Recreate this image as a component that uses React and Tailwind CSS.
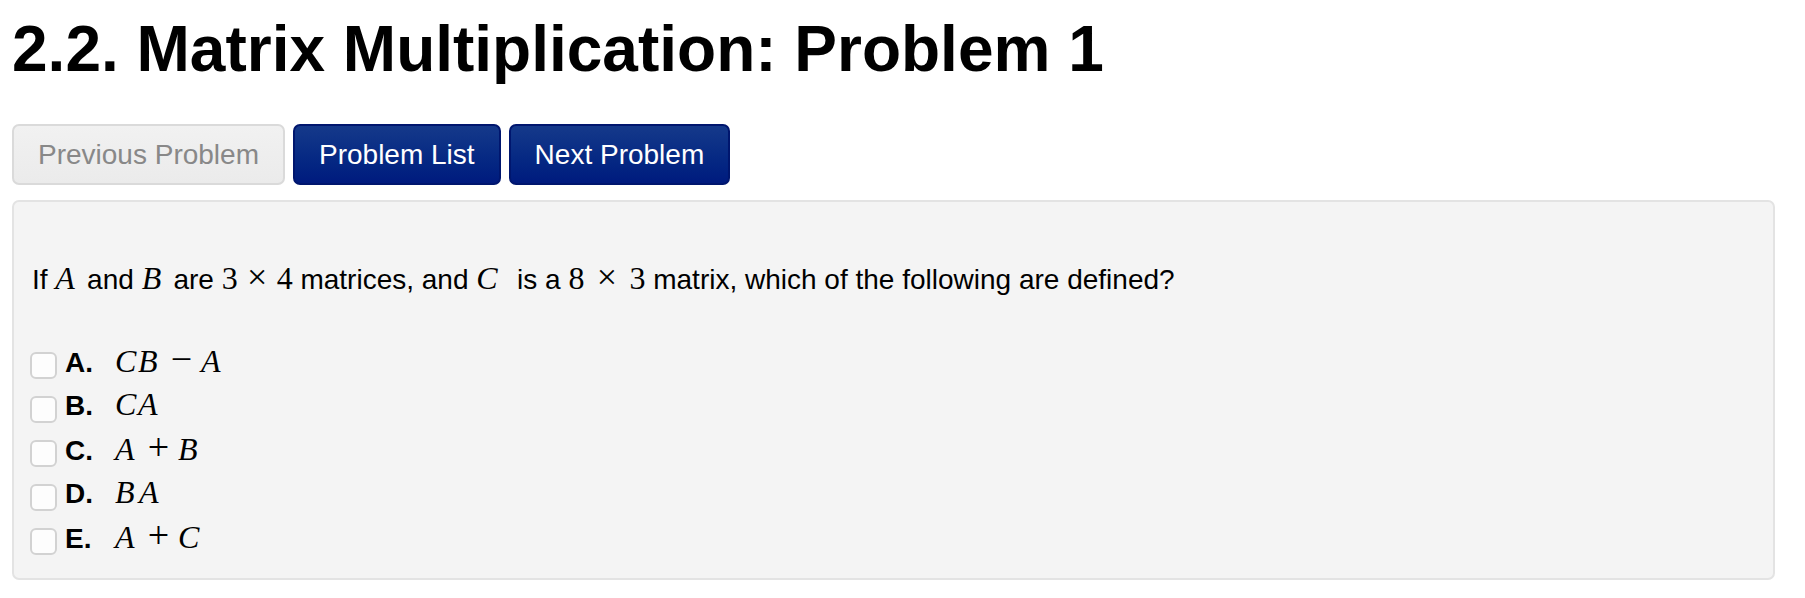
const options = [
  { label: "A", expr: ["C", "B", "−", "A"] },
  { label: "B", expr: ["C", "A"] },
  { label: "C", expr: ["A", "+", "B"] },
  { label: "D", expr: ["B", "A"] },
  { label: "E", expr: ["A", "+", "C"] },
];

// advance widths close to the TeX fonts at 32px
const varWidth = { A: "w-[24px]", B: "w-[24px]", C: "w-[23px]" };

const Var = ({ children, wide }) => (
  <span className={`inline-block italic ${varWidth[children] || "w-[16px]"} ${wide ? "mr-[10px]" : ""}`}>{children}</span>
);

const Num = ({ children }) => <span className="inline-block w-[16px]">{children}</span>;

const Op = ({ children, wide }) => (
  <span
    className={`inline-block w-[25px] text-center not-italic ${wide ? "mx-[10px]" : "mx-[7px]"} ${
      children === "×" ? "text-[36px]" : "text-[38px]"
    }`}
  >
    {children}
  </span>
);

const Expr = ({ parts, wide }) => (
  <span className="font-['Liberation_Serif',serif] text-[32px] leading-none">
    {parts.map((p, i) =>
      p === "−" || p === "+" || p === "×" ? (
        <Op key={i} wide={wide}>
          {p}
        </Op>
      ) : /\d/.test(p) ? (
        <Num key={i}>{p}</Num>
      ) : (
        <Var key={i} wide={wide}>
          {p}
        </Var>
      )
    )}
  </span>
);

export default function App() {
  return (
    <div className="min-h-screen bg-white font-['Liberation_Sans',Arial,sans-serif] text-black">
      <h1 className="ml-[12px] pt-[14px] text-[64px] font-bold leading-[70px]">2.2. Matrix Multiplication: Problem 1</h1>

      <div className="ml-[12px] mt-[40px] flex gap-[8px]">
        <button className="rounded-[7px] border-2 border-[#dadada] bg-gradient-to-b from-[#f1f1f1] to-[#ebebeb] px-[24px] py-[11px] text-[28px] leading-[35px] text-[#888888]">
          Previous Problem
        </button>
        <button className="rounded-[7px] border-2 border-[#00166e] bg-gradient-to-b from-[#15398a] to-[#001a7e] px-[24px] py-[11px] text-[28px] leading-[35px] text-white">
          Problem List
        </button>
        <button className="rounded-[7px] border-2 border-[#00166e] bg-gradient-to-b from-[#15398a] to-[#001a7e] px-[24px] py-[11px] text-[28px] leading-[35px] text-white">
          Next Problem
        </button>
      </div>

      <div className="ml-[12px] mr-[30px] mt-[15px] rounded-[7px] border-2 border-[#e3e3e3] bg-[#f4f4f4] pb-[18px] pl-[18px] pt-[57px]">
        <p className="text-[28px] leading-[40px]">
          If <Expr parts={["A"]} /> and <Expr parts={["B"]} /> are <Expr parts={["3", "×", "4"]} /> matrices, and{" "}
          <Expr parts={["C"]} wide /> is a <Expr parts={["8", "×", "3"]} wide /> matrix, which of the following are defined?
        </p>

        <div className="-ml-[2px] mt-[40px]">
          {options.map((o) => (
            <div key={o.label} className="flex h-[44px] items-start">
              <span className="mt-[12px] h-[27px] w-[27px] rounded-[6px] border-2 border-[#d2d2d2] bg-[#fdfdfd]" />
              <span className="ml-[8px] flex items-baseline leading-[44px]">
                <span className="w-[50px] text-[28px] font-bold">{o.label}.</span>
                <Expr parts={o.expr} />
              </span>
            </div>
          ))}
        </div>
      </div>
    </div>
  );
}
